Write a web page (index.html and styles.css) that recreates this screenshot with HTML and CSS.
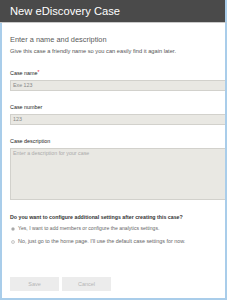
FILE: index.html
```html
<!DOCTYPE html>
<html>
<head>
<meta charset="utf-8">
<link rel="stylesheet" href="styles.css">
</head>
<body>
<div class="dialog">
  <div class="header">New eDiscovery Case</div>
  <div class="body">
    <h2 class="heading">Enter a name and description</h2>
    <p class="sub">Give this case a friendly name so you can easily find it again later.</p>
    <div class="label l1">Case name<span class="req">*</span></div>
    <div class="input"><span>Exe 123</span></div>
    <div class="label l2">Case number</div>
    <div class="input"><span>123</span></div>
    <div class="label l2">Case description</div>
    <div class="input area"><span class="ph">Enter a description for your case</span></div>
    <div class="question">Do you want to configure additional settings after creating this case?</div>
    <div class="radio r1"><span class="dot on"></span>Yes, I want to add members or configure the analytics settings.</div>
    <div class="radio r2"><span class="dot"></span>No, just go to the home page. I'll use the default case settings for now.</div>
    <div class="buttons">
      <div class="btn">Save</div>
      <div class="btn">Cancel</div>
    </div>
  </div>
</div>
</body>
</html>
```

FILE: styles.css
```css
html, body {
  margin: 0;
  padding: 0;
  background: #ffffff;
}
body {
  font-family: "Liberation Sans", Arial, sans-serif;
  width: 227px;
  height: 300px;
  overflow: hidden;
}
.dialog {
  width: 227px;
  height: 300px;
  display: flex;
  flex-direction: column;
}
.header {
  height: 23px;
  box-sizing: border-box;
  background: #4a4a4a;
  color: #ffffff;
  font-size: 11.2px;
  line-height: 22px;
  padding-left: 10px;
  border-right: 2px solid #a9cdea;
  border-bottom: 1px solid #c9c9c9;
}
.body {
  flex: 1;
  border: 2px solid #a9cdea;
  border-top: none;
  padding-left: 8px;
  overflow: hidden;
  color: #333;
}
.heading {
  margin: 12px 0 0;
  font-size: 7.4px;
  line-height: 9px;
  font-weight: normal;
  color: #5a5a5a;
}
.sub {
  margin: 4px 0 0;
  font-size: 5.7px;
  line-height: 7px;
  color: #555;
}
.label {
  font-size: 5.4px;
  line-height: 7px;
  color: #222;
}
.l1 { margin-top: 15px; }
.l2 { margin-top: 13px; }
.req { color: #e23; font-size: 5px; vertical-align: top; line-height: 4px; }
.input {
  margin-top: 3px;
  height: 11px;
  box-sizing: border-box;
  width: 220px;
  background: #e9e8e3;
  border: 1px solid #d2d1cc;
  font-size: 5.3px;
  line-height: 9px;
  padding-left: 2px;
  color: #888;
}
.input.area {
  height: 52px;
  line-height: 8px;
}
.ph { color: #aaa; }
.question {
  margin-top: 14px;
  font-size: 5.25px;
  line-height: 7px;
  font-weight: bold;
  color: #333;
}
.radio {
  font-size: 5.1px;
  line-height: 7px;
  color: #666;
  display: flex;
  align-items: center;
  gap: 3px;
}
.r2 { font-size: 5.4px; }
.r1 { margin-top: 4px; }
.r2 { margin-top: 6px; }
.dot {
  width: 4px;
  height: 4px;
  border-radius: 50%;
  border: 0.5px solid #ccc;
  background: #eee;
  box-sizing: border-box;
  margin-left: 1px;
}
.dot.on {
  background: radial-gradient(circle, #999 0 1px, #eee 1.2px);
}
.buttons {
  margin-top: 32px;
  display: flex;
  gap: 3px;
}
.btn {
  width: 49px;
  height: 14px;
  background: #ececec;
  color: #b5b5b5;
  font-size: 5.5px;
  line-height: 14px;
  text-align: center;
}
```
